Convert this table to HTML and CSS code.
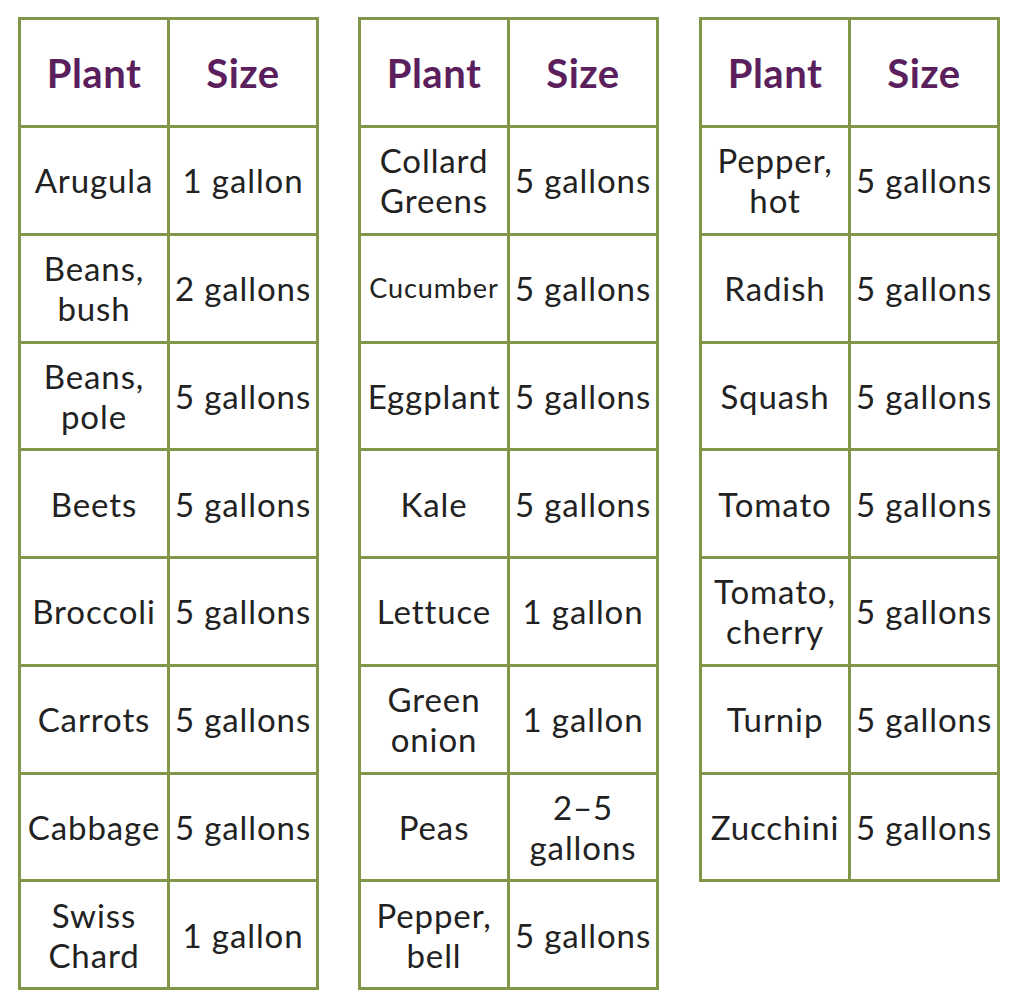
FILE: index.html
```html
<!DOCTYPE html>
<html>
<head>
<meta charset="utf-8">
<link rel="stylesheet" href="styles.css">
</head>
<body>
<div class="page">
  <div class="sheet">
    <div class="cell head">Plant</div><div class="cell head">Size</div>
    <div class="cell">Arugula</div><div class="cell">1 gallon</div>
    <div class="cell">Beans,<br>bush</div><div class="cell">2 gallons</div>
    <div class="cell">Beans,<br>pole</div><div class="cell">5 gallons</div>
    <div class="cell">Beets</div><div class="cell">5 gallons</div>
    <div class="cell">Broccoli</div><div class="cell">5 gallons</div>
    <div class="cell">Carrots</div><div class="cell">5 gallons</div>
    <div class="cell">Cabbage</div><div class="cell">5 gallons</div>
    <div class="cell">Swiss<br>Chard</div><div class="cell">1 gallon</div>
  </div>
  <div class="sheet">
    <div class="cell head">Plant</div><div class="cell head">Size</div>
    <div class="cell">Collard<br>Greens</div><div class="cell">5 gallons</div>
    <div class="cell small">Cucumber</div><div class="cell">5 gallons</div>
    <div class="cell">Eggplant</div><div class="cell">5 gallons</div>
    <div class="cell">Kale</div><div class="cell">5 gallons</div>
    <div class="cell">Lettuce</div><div class="cell">1 gallon</div>
    <div class="cell">Green<br>onion</div><div class="cell">1 gallon</div>
    <div class="cell">Peas</div><div class="cell">2–5<br>gallons</div>
    <div class="cell">Pepper,<br>bell</div><div class="cell">5 gallons</div>
  </div>
  <div class="sheet last">
    <div class="cell head">Plant</div><div class="cell head">Size</div>
    <div class="cell">Pepper,<br>hot</div><div class="cell">5 gallons</div>
    <div class="cell">Radish</div><div class="cell">5 gallons</div>
    <div class="cell">Squash</div><div class="cell">5 gallons</div>
    <div class="cell">Tomato</div><div class="cell">5 gallons</div>
    <div class="cell">Tomato,<br>cherry</div><div class="cell">5 gallons</div>
    <div class="cell">Turnip</div><div class="cell">5 gallons</div>
    <div class="cell">Zucchini</div><div class="cell">5 gallons</div>
  </div>
</div>
</body>
</html>
```
FILE: styles.css
```css
html, body {
  margin: 0;
  padding: 0;
  background: #fff;
}
.page {
  display: flex;
  align-items: flex-start;
  gap: 39px;
  padding: 17px 0 0 18px;
  font-family: Lato, "Liberation Sans", sans-serif;
  color: #222;
}
.sheet {
  display: grid;
  grid-template-columns: 146px 146px;
  grid-template-rows: 105px;
  grid-auto-rows: 104.75px;
  gap: 3px;
  padding: 3px;
  background: #829649;
}
.sheet.last {
  margin-left: 1px;
}
.cell {
  background: #fff;
  display: flex;
  align-items: center;
  justify-content: center;
  text-align: center;
  font-size: 33px;
  line-height: 40px;
  white-space: nowrap;
  letter-spacing: 0.9px;
}
.cell.head {
  color: #5a1f5c;
  font-weight: 700;
  font-size: 40px;
  letter-spacing: 0.5px;
}
.cell.small {
  font-size: 27px;
  letter-spacing: 0.9px;
}
```
